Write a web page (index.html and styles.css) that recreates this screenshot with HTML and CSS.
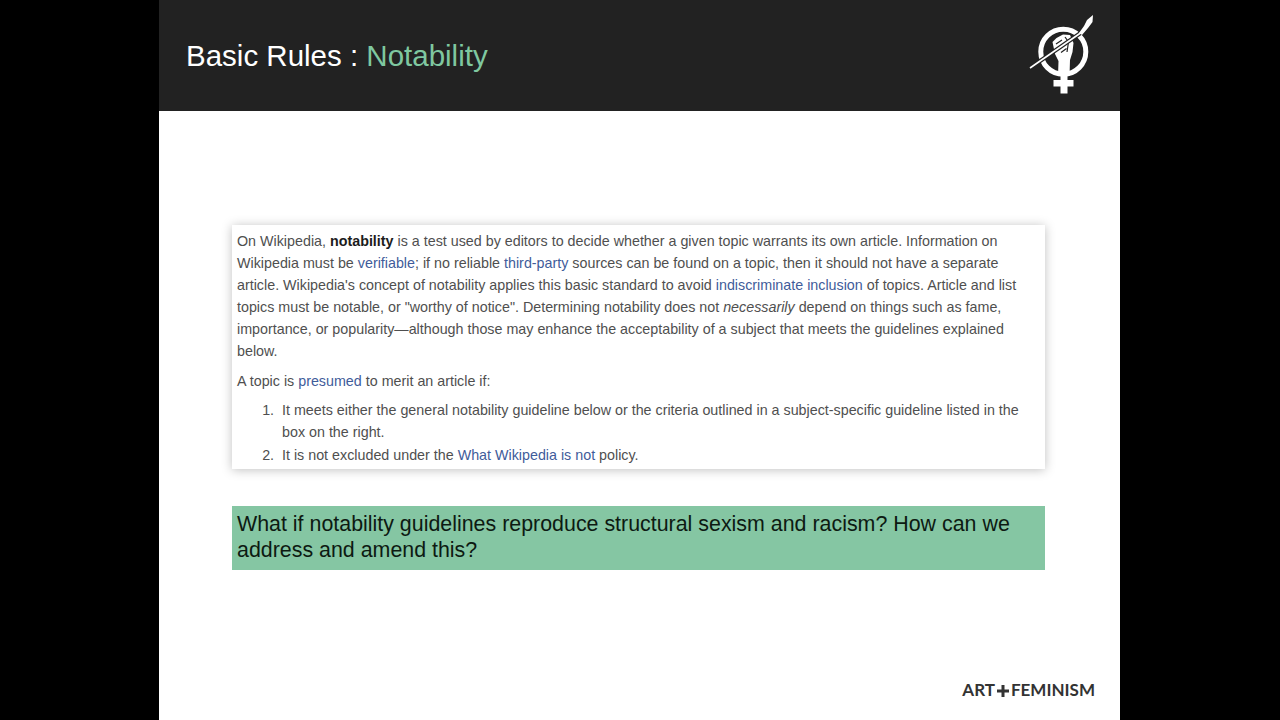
FILE: index.html
```html
<!DOCTYPE html>
<html lang="en">
<head>
<meta charset="utf-8">
<title>Basic Rules : Notability</title>
<link rel="stylesheet" href="styles.css">
</head>
<body>
<main class="slide">
  <header class="slide-header">
    <h1 class="title">Basic Rules : <span class="title-accent">Notability</span></h1>
    <svg class="emblem" viewBox="0 0 90 95" aria-hidden="true">
      <circle cx="43.3" cy="46.7" r="22.5" fill="none" stroke="#fff" stroke-width="5"/>
      <path d="M38.500 68H47.500V75H53.500V81.500H47.500V88.500H40.500V81.500H33.500V75H40.500V70Z" fill="#fff"/>
      <path d="M32.500 37L36.500 33L43 29.500L50 30L53.500 38L52.500 47L50 55L49.500 71H38L38.500 56L35 49Z" fill="#fff"/>
      <path d="M36 39L42 35M38.500 43.500L45 39M41 47.500L46.500 43.500M45 32L48.500 37L47 47" stroke="#222" stroke-width="1.2" fill="none"/>
      <path d="M10 63L62 27" stroke="#222" stroke-width="4"/>
      <path d="M10 63L62 27" stroke="#fff" stroke-width="1.6"/>
      <path d="M59 28L64 21L67 15L73 10L72.500 17L68 23L62 30Z" fill="#fff"/>
    </svg>
  </header>
  <section class="slide-body">
    <article class="excerpt">
      <p class="para">On Wikipedia, <b class="strong">notability</b> is a test used by editors to decide whether a given topic warrants its own article. Information on Wikipedia must be <span class="link">verifiable</span>; if no reliable <span class="link">third-party</span> sources can be found on a topic, then it should not have a separate article. Wikipedia's concept of notability applies this basic standard to avoid <span class="link">indiscriminate inclusion</span> of topics. Article and list topics must be notable, or "worthy of notice". Determining notability does not <i>necessarily</i> depend on things such as fame, importance, or popularity—although those may enhance the acceptability of a subject that meets the guidelines explained below.</p>
      <p class="para para-second">A topic is <span class="link">presumed</span> to merit an article if:</p>
      <ol class="list">
        <li>It meets either the general notability guideline below or the criteria outlined in a subject-specific guideline listed in the box on the right.</li>
        <li class="list-next">It is not excluded under the <span class="link">What Wikipedia is not</span> policy.</li>
      </ol>
    </article>
    <p class="callout">What if notability guidelines reproduce structural sexism and racism? How can we address and amend this?</p>
  </section>
  <footer class="slide-footer">
    <span class="brand">ART<svg class="brand-plus" viewBox="0 0 12 12" aria-hidden="true"><path d="M4.500 0H7.500V4.500H12V7.500H7.500V12H4.500V7.500H0V4.500H4.500Z"/></svg>FEMINISM</span>
  </footer>
</main>
</body>
</html>
```

FILE: styles.css
```css
* { box-sizing: border-box; }
html, body { margin: 0; height: 720px; overflow: hidden; background: #000; }
body { padding-left: 159px; font-family: "Liberation Sans", Arial, sans-serif; }
.slide { width: 961px; height: 720px; background: #fff; display: flex; flex-direction: column; }
.slide-header { height: 111px; flex: none; background: #222; display: flex; align-items: center; justify-content: space-between; padding: 0 10px 0 27px; }
.title { margin: 0; font-size: 29.5px; font-weight: 400; color: #fff; }
.title-accent { color: #7fc8a0; }
.emblem { width: 90px; height: 95px; margin-bottom: 6px; }
.slide-body { flex: 1; padding: 114px 75px 0 73px; }
.excerpt { height: 244px; padding: 5px 20px 0 5px; background: #fff; box-shadow: 0 1px 10px rgba(0,0,0,.25); color: #4f4f4f; font-size: 14.3px; line-height: 22.1px; }
.para { margin: 0; }
.para-second { margin-top: 7px; }
.strong { color: #1c1c1c; }
.link { color: #3f5c9a; }
.list { margin: 7px 0 0; padding-left: 45px; }
.list li::marker { content: counter(list-item) ".  "; }
.list-next { margin-top: 1px; }
.callout { margin: 37px 0 0; height: 64px; padding: 6px 4px 0 5px; background: #85c6a3; color: #0d1a12; font-size: 21.4px; line-height: 25.5px; }
.slide-footer { height: 62px; display: flex; justify-content: flex-end; padding-right: 25px; }
.brand { font-family: Lato, sans-serif; font-weight: 700; font-size: 17px; color: #333; line-height: 22px; margin-top: 21px; white-space: nowrap; }
.brand-plus { width: 12px; height: 12px; margin: 0 2px; fill: #333; vertical-align: -0.5px; }
```
